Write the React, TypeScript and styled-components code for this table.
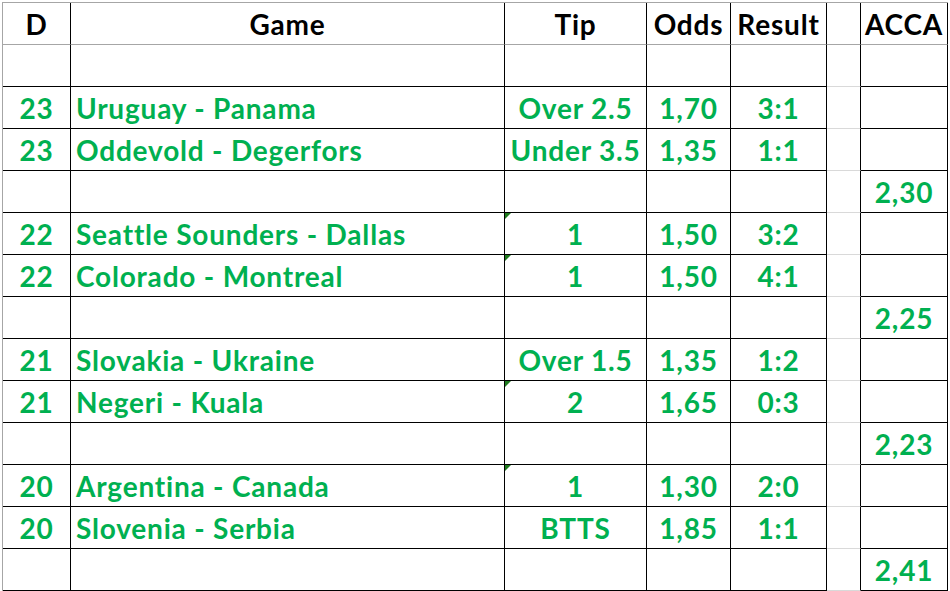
import styled, { createGlobalStyle } from 'styled-components';

const GlobalStyle = createGlobalStyle`
  html, body {
    margin: 0;
    padding: 0;
    background: #ffffff;
  }
`;

const COLS = '68px 434px 142px 84px 96px 34px 87px';

const Sheet = styled.div`
  display: grid;
  grid-template-columns: ${COLS};
  grid-auto-rows: 42px;
  margin: 2px 0 0 2px;
  width: max-content;
  border-left: 1px solid #a6a6a6;
  border-top: 1px solid #a6a6a6;
  font-family: Lato, "Liberation Sans", sans-serif;
  font-weight: 700;
  font-size: 28px;
  letter-spacing: 0.8px;
`;

type Align = 'left' | 'center';

const Cell = styled.div<{ $align?: Align; $header?: boolean; $gap?: boolean }>`
  position: relative;
  display: flex;
  align-items: flex-end;
  justify-content: ${(p) => (p.$align === 'left' ? 'flex-start' : 'center')};
  padding: 0 0 6px ${(p) => (p.$align === 'left' ? '5px' : '0')};
  box-sizing: border-box;
  line-height: 1;
  white-space: nowrap;
  color: ${(p) => (p.$header ? '#000000' : '#00b050')};
  border-right: 1px solid #000000;
  border-bottom: 1px solid
    ${(p) => (p.$header ? '#a6a6a6' : p.$gap ? '#d9d9d9' : '#000000')};
`;

const TextMark = styled.span`
  position: absolute;
  top: 0;
  left: 0;
  width: 0;
  height: 0;
  border-top: 6px solid #1e7b1e;
  border-right: 6px solid transparent;
`;

type Row = {
  d?: string;
  game?: string;
  tip?: string;
  odds?: string;
  result?: string;
  acca?: string;
  mark?: boolean;
};

const rows: Row[] = [
  {},
  { d: '23', game: 'Uruguay - Panama', tip: 'Over 2.5', odds: '1,70', result: '3:1' },
  { d: '23', game: 'Oddevold - Degerfors', tip: 'Under 3.5', odds: '1,35', result: '1:1' },
  { acca: '2,30' },
  { d: '22', game: 'Seattle Sounders - Dallas', tip: '1', odds: '1,50', result: '3:2', mark: true },
  { d: '22', game: 'Colorado - Montreal', tip: '1', odds: '1,50', result: '4:1', mark: true },
  { acca: '2,25' },
  { d: '21', game: 'Slovakia - Ukraine', tip: 'Over 1.5', odds: '1,35', result: '1:2' },
  { d: '21', game: 'Negeri - Kuala', tip: '2', odds: '1,65', result: '0:3', mark: true },
  { acca: '2,23' },
  { d: '20', game: 'Argentina - Canada', tip: '1', odds: '1,30', result: '2:0', mark: true },
  { d: '20', game: 'Slovenia - Serbia', tip: 'BTTS', odds: '1,85', result: '1:1' },
  { acca: '2,41' },
];

export default function App() {
  return (
    <>
      <GlobalStyle />
      <Sheet>
        <Cell $header>D</Cell>
        <Cell $header>Game</Cell>
        <Cell $header>Tip</Cell>
        <Cell $header>Odds</Cell>
        <Cell $header>Result</Cell>
        <Cell $header />
        <Cell $header>ACCA</Cell>

        {rows.map((r, i) => (
          <>
            <Cell key={`d${i}`}>{r.d}</Cell>
            <Cell key={`g${i}`} $align="left">{r.game}</Cell>
            <Cell key={`t${i}`}>
              {r.mark && <TextMark />}
              {r.tip}
            </Cell>
            <Cell key={`o${i}`}>{r.odds}</Cell>
            <Cell key={`r${i}`}>{r.result}</Cell>
            <Cell key={`s${i}`} $gap />
            <Cell key={`a${i}`}>{r.acca}</Cell>
          </>
        ))}
      </Sheet>
    </>
  );
}
